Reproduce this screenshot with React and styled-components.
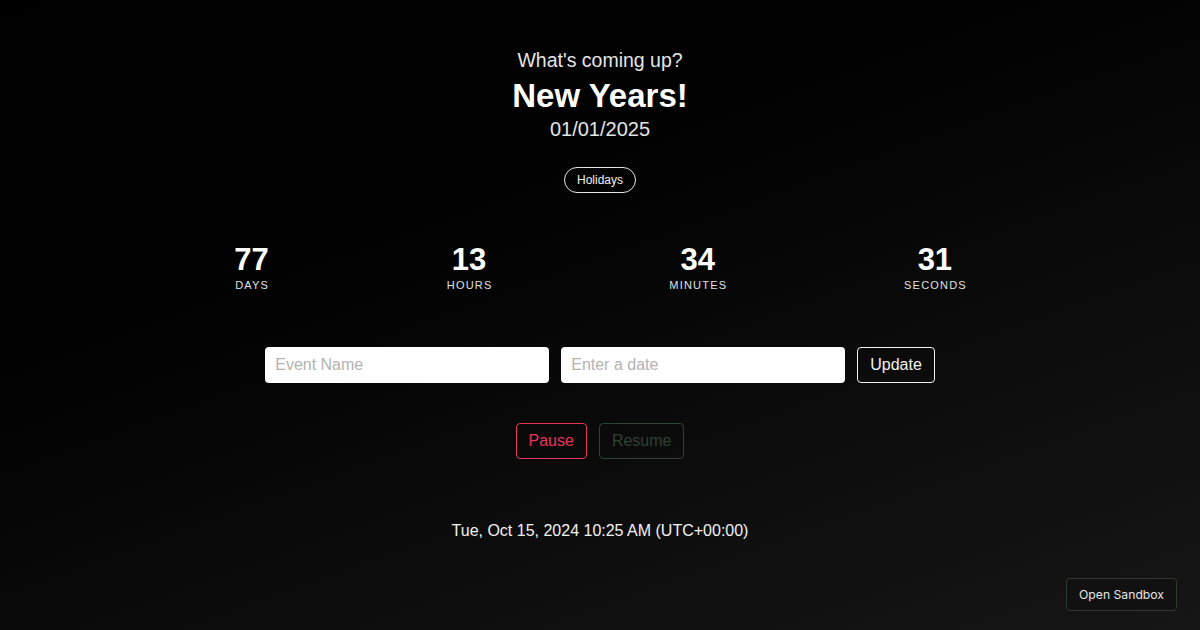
import React, { useState } from 'react';
import styled, { createGlobalStyle } from 'styled-components';

const GlobalStyle = createGlobalStyle`
  html, body, #root {
    margin: 0;
    height: 100%;
  }
  body {
    font-family: "Liberation Sans", Arial, sans-serif;
    background: #000;
    color: #fff;
  }
`;

const Page = styled.div`
  min-height: 630px;
  box-sizing: border-box;
  background: linear-gradient(160deg, #000 0%, #030303 40%, #0d0d0d 70%, #161616 100%);
  display: flex;
  flex-direction: column;
  align-items: center;
  padding-top: 48px;
  position: relative;
`;

const Lead = styled.div`
  font-size: 19.5px;
  color: #e4e4e4;
  line-height: 24px;
`;

const Title = styled.h1`
  margin: 5px 0 0;
  font-size: 33px;
  font-weight: 700;
  line-height: 38px;
`;

const DateLine = styled.div`
  margin-top: 2px;
  font-size: 20px;
  color: #e4e4e4;
  line-height: 24px;
`;

const Tag = styled.span`
  margin-top: 26px;
  border: 1px solid #e6e6e6;
  border-radius: 13px;
  padding: 0 12px;
  height: 24px;
  line-height: 24px;
  font-size: 12px;
  color: #f0f0f0;
`;

const Countdown = styled.div`
  margin-top: 49px;
  display: flex;
  gap: 178px;
`;

const Unit = styled.div`
  display: flex;
  flex-direction: column;
  align-items: center;
`;

const Value = styled.div`
  font-size: 31px;
  font-weight: 700;
  line-height: 36px;
`;

const Label = styled.div`
  margin-top: 1px;
  font-size: 11px;
  letter-spacing: 1.2px;
  margin-right: -1.2px;
  color: #e0e0e0;
  text-transform: uppercase;
`;

const Form = styled.div`
  margin-top: 56px;
  display: flex;
  gap: 12px;
`;

const Input = styled.input`
  width: 284px;
  height: 36px;
  box-sizing: border-box;
  border: none;
  border-radius: 4px;
  padding: 0 10px;
  font-family: inherit;
  font-size: 16px;
  background: #fff;
  &::placeholder {
    color: #b3b3b3;
  }
`;

const Button = styled.button`
  height: 36px;
  box-sizing: border-box;
  padding: 0 12px;
  background: transparent;
  border: 1px solid ${p => p.$tone};
  color: ${p => p.$tone};
  border-radius: 4px;
  font-family: inherit;
  font-size: 16px;
  cursor: pointer;
`;

const Controls = styled.div`
  margin-top: 40px;
  display: flex;
  gap: 12px;
`;

const Now = styled.div`
  margin-top: 63px;
  font-size: 16px;
  color: #f2f2f2;
`;

const Sandbox = styled.button`
  position: absolute;
  right: 23px;
  bottom: 19px;
  height: 33px;
  padding: 0 12px;
  background: #111;
  border: 1px solid #2b3b2e;
  border-radius: 4px;
  color: #e6e6e6;
  font-family: Inter, "Liberation Sans", sans-serif;
  font-size: 12.2px;
`;

const units = [
  { value: 77, label: 'Days' },
  { value: 13, label: 'Hours' },
  { value: 34, label: 'Minutes' },
  { value: 31, label: 'Seconds' },
];

export default function App() {
  const [name, setName] = useState('');
  const [date, setDate] = useState('');

  return (
    <>
      <GlobalStyle />
      <Page>
        <Lead>What's coming up?</Lead>
        <Title>New Years!</Title>
        <DateLine>01/01/2025</DateLine>
        <Tag>Holidays</Tag>
        <Countdown>
          {units.map(u => (
            <Unit key={u.label}>
              <Value>{u.value}</Value>
              <Label>{u.label}</Label>
            </Unit>
          ))}
        </Countdown>
        <Form>
          <Input placeholder="Event Name" value={name} onChange={e => setName(e.target.value)} />
          <Input placeholder="Enter a date" value={date} onChange={e => setDate(e.target.value)} />
          <Button $tone="#f2f2f2">Update</Button>
        </Form>
        <Controls>
          <Button $tone="#e8335a">Pause</Button>
          <Button $tone="#2e4232">Resume</Button>
        </Controls>
        <Now>Tue, Oct 15, 2024 10:25 AM (UTC+00:00)</Now>
        <Sandbox>Open Sandbox</Sandbox>
      </Page>
    </>
  );
}
